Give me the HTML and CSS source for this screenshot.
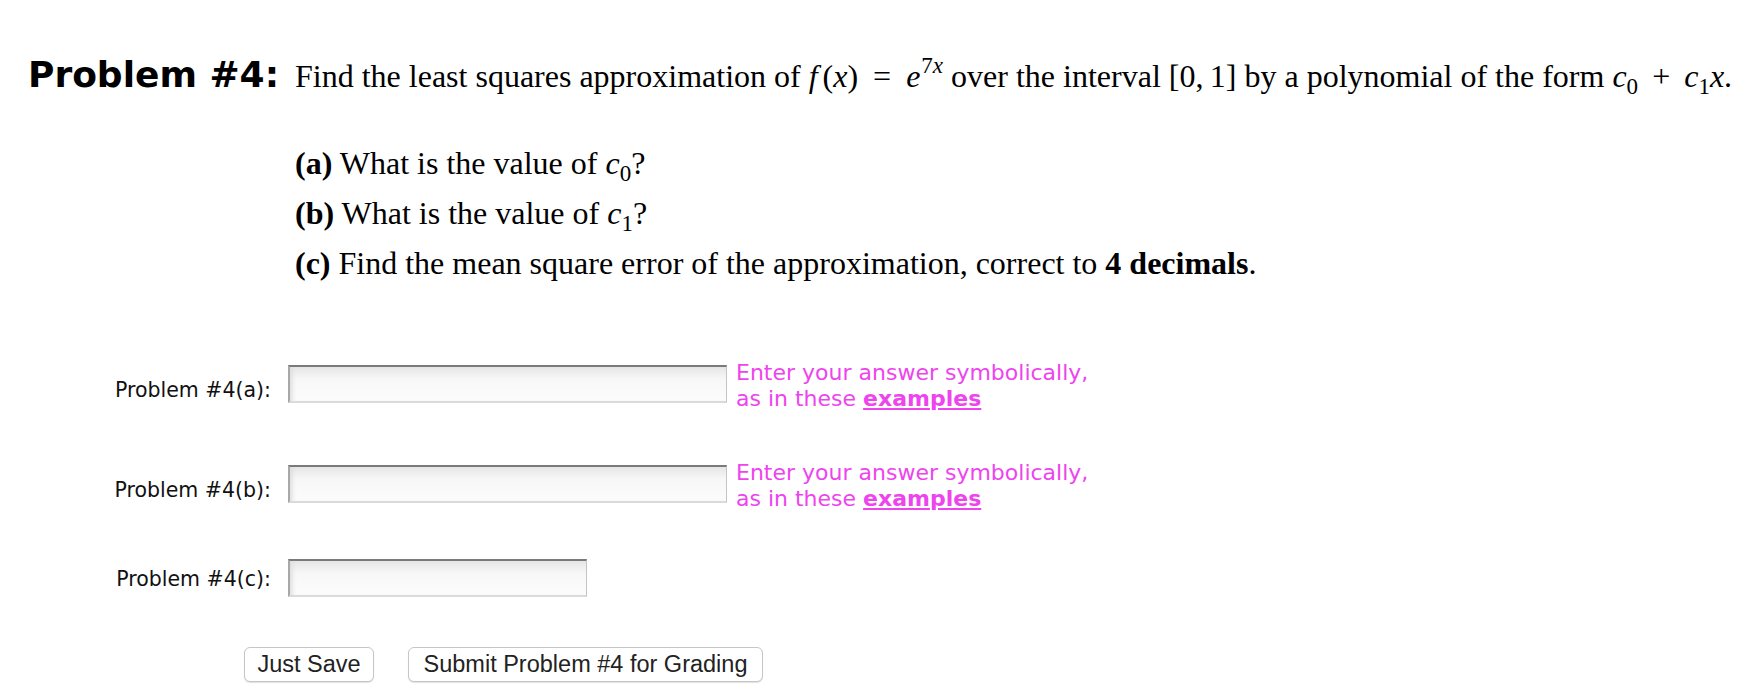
FILE: index.html
```html
<!DOCTYPE html>
<html>
<head>
<meta charset="utf-8">
<title>Problem #4</title>
<link rel="stylesheet" href="styles.css">
</head>
<body>
<div class="page">
  <div class="statement">
    <span class="ptitle">Problem #4:</span>
    <span class="ptext">Find the least squares approximation of <i>f</i><span class="fsp">(</span><i>x</i>)<span class="op">=</span><i>e</i><sup>7<i>x</i></sup> over the interval [0,&#8201;1] by a polynomial of the form <i>c</i><sub>0</sub><span class="op2">+</span><i>c</i><sub>1</sub><i>x</i>.</span>
  </div>
  <div class="parts">
    <div class="part"><b>(a)</b> What is the value of <i>c</i><sub>0</sub>?</div>
    <div class="part"><b>(b)</b> What is the value of <i>c</i><sub>1</sub>?</div>
    <div class="part"><b>(c)</b> Find the mean square error of the approximation, correct to <b>4 decimals</b>.</div>
  </div>
  <div class="row row-a">
    <label class="lbl">Problem #4(a):</label>
    <input class="ans ans-wide" type="text">
    <div class="help">Enter your answer symbolically,<br>as in these <a href="#" class="ex">examples</a></div>
  </div>
  <div class="row row-b">
    <label class="lbl">Problem #4(b):</label>
    <input class="ans ans-wide" type="text">
    <div class="help">Enter your answer symbolically,<br>as in these <a href="#" class="ex">examples</a></div>
  </div>
  <div class="row row-c">
    <label class="lbl lbl-plain">Problem #4(c):</label>
    <input class="ans ans-narrow" type="text">
  </div>
  <div class="buttons">
    <button class="btn btn-save" type="button">Just Save</button>
    <button class="btn btn-submit" type="button">Submit Problem #4 for Grading</button>
  </div>
</div>
</body>
</html>
```

FILE: styles.css
```css
html, body {
  margin: 0;
  padding: 0;
  background: #ffffff;
}
.page {
  width: 1746px;
  height: 700px;
  overflow: hidden;
  font-family: "Liberation Serif", "Times New Roman", serif;
  color: #000;
}
.statement {
  padding: 54px 0 0 28px;
  line-height: 42px;
  white-space: nowrap;
  display: flex;
  align-items: baseline;
}
.ptitle {
  font-family: "DejaVu Sans", Verdana, sans-serif;
  font-weight: bold;
  font-size: 36px;
  width: 267px;
  flex: none;
}
.ptext {
  font-size: 32px;
}
.fsp {
  padding-left: 5px;
}
.op {
  padding: 0 15px;
}
.op2 {
  padding: 0 14px;
}
sup, sub {
  font-size: 72%;
  line-height: 0;
  position: relative;
  vertical-align: baseline;
}
sup { top: -0.62em; padding-left: 1px; }
sub { top: 0.32em; }
.parts {
  margin: 41px 0 0 295px;
  font-size: 32px;
}
.part {
  line-height: 50px;
  height: 50px;
}
.row {
  display: flex;
  align-items: center;
}
.row-a { margin-top: 67px; }
.row-b { margin-top: 43px; }
.row-c { margin-top: 47px; }
.lbl {
  width: 271px;
  flex: none;
  text-align: right;
  margin-right: 17px;
  padding-top: 12px;
  font-family: "DejaVu Sans", Verdana, sans-serif;
  font-size: 20.5px;
  color: #111;
}
.lbl-plain {
  padding-top: 2px;
}
.ans {
  box-sizing: border-box;
  height: 38px;
  margin: 0;
  padding: 0 6px;
  border-style: solid;
  border-width: 2px 1px 2px 2px;
  border-color: #7a7a7a #c4c4c4 #dadada #a8a8a8;
  background: linear-gradient(#e6e6e6, #f7f7f7 35%, #fcfcfc);
  box-shadow: inset 5px 0 5px -3px #dcdcdc;
  font-size: 20px;
  flex: none;
}
.ans-wide { width: 439px; }
.ans-narrow { width: 299px; }
.help {
  margin-left: 9px;
  padding-top: 5px;
  font-family: "DejaVu Sans", Verdana, sans-serif;
  font-size: 22px;
  line-height: 26px;
  color: #ee44ee;
}
.ex {
  color: #ee44ee;
  font-weight: bold;
  text-decoration: underline;
}
.buttons {
  margin: 50px 0 0 244px;
  display: flex;
  gap: 34px;
}
.btn {
  box-sizing: border-box;
  height: 35px;
  padding: 0;
  font-family: "Liberation Sans", Arial, sans-serif;
  font-size: 23.5px;
  color: #222;
  background: #ffffff;
  border: 1px solid #c6c6c6;
  border-radius: 6px;
  box-shadow: 0 1px 1px rgba(0,0,0,0.12);
}
.btn-save { width: 130px; }
.btn-submit { width: 355px; }
```
